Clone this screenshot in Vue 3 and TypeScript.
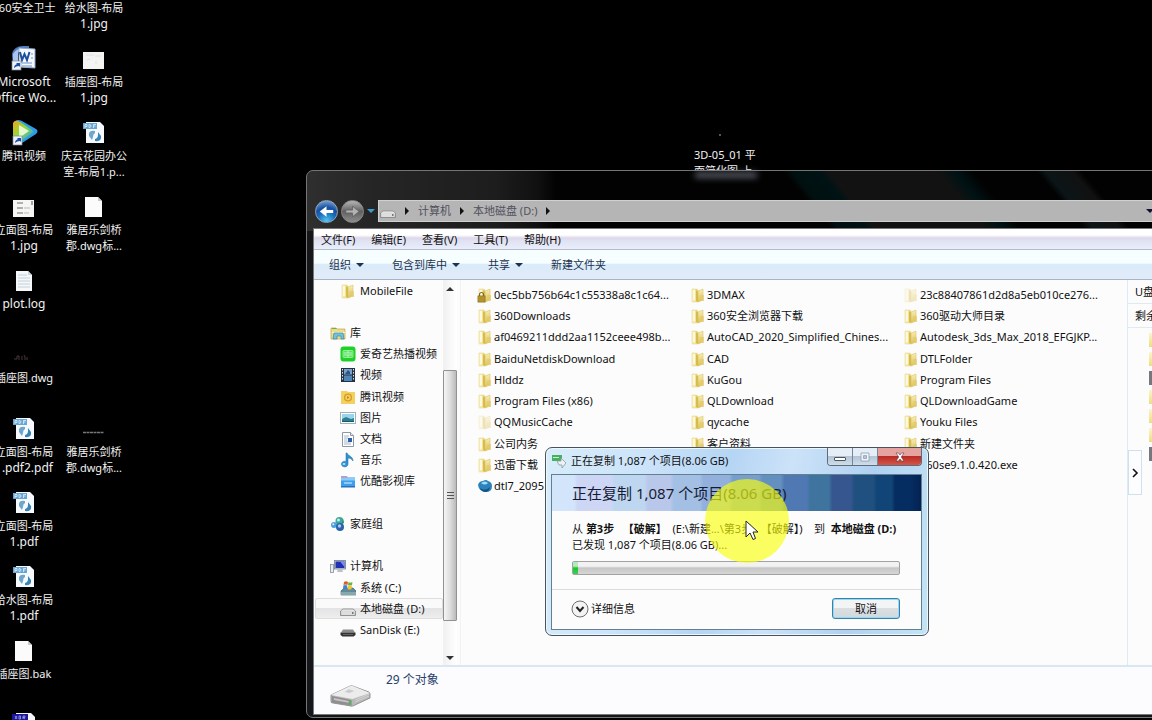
<script setup lang="ts">
interface DesktopIcon {
  icon: string
  lines: string[]
  row: number
  col: number
}
interface NavItem {
  icon: string
  label: string
  row: number
  root?: boolean
  selected?: boolean
}
interface FileItem {
  icon: string
  name: string
}

const desktopIcons: DesktopIcon[] = [
  { icon: '', lines: ['360安全卫士'], row: 1, col: 1 },
  { icon: '', lines: ['给水图-布局', '1.jpg'], row: 1, col: 2 },
  { icon: 'd-word', lines: ['Microsoft', 'Office Wo...'], row: 2, col: 1 },
  { icon: 'd-plan', lines: ['插座图-布局', '1.jpg'], row: 2, col: 2 },
  { icon: 'd-video', lines: ['腾讯视频'], row: 3, col: 1 },
  { icon: 'd-pdf', lines: ['庆云花园办公', '室-布局1.p...'], row: 3, col: 2 },
  { icon: 'd-sheet', lines: ['立面图-布局', '1.jpg'], row: 4, col: 1 },
  { icon: 'd-page', lines: ['雅居乐剑桥', '郡.dwg标...'], row: 4, col: 2 },
  { icon: 'd-log', lines: ['plot.log'], row: 5, col: 1 },
  { icon: 'd-faint', lines: ['插座图.dwg'], row: 6, col: 1 },
  { icon: 'd-pdf', lines: ['立面图-布局', '1.pdf2.pdf'], row: 7, col: 1 },
  { icon: 'd-line', lines: ['雅居乐剑桥', '郡.dwg标...'], row: 7, col: 2 },
  { icon: 'd-pdf', lines: ['立面图-布局', '1.pdf'], row: 8, col: 1 },
  { icon: 'd-pdf', lines: ['给水图-布局', '1.pdf'], row: 9, col: 1 },
  { icon: 'd-page', lines: ['插座图.bak'], row: 10, col: 1 },
  { icon: 'd-xdr', lines: [], row: 11, col: 1 },
]

const menus = ['文件(F)', '编辑(E)', '查看(V)', '工具(T)', '帮助(H)']

const commands = [
  { label: '组织', drop: true },
  { label: '包含到库中', drop: true },
  { label: '共享', drop: true },
  { label: '新建文件夹', drop: false },
]

const navItems: NavItem[] = [
  { icon: 'i-folder', label: 'MobileFile', row: 1 },
  { icon: 'i-library', label: '库', row: 3, root: true },
  { icon: 'i-iqiyi', label: '爱奇艺热播视频', row: 4 },
  { icon: 'i-film', label: '视频', row: 5 },
  { icon: 'i-tencent', label: '腾讯视频', row: 6 },
  { icon: 'i-picture', label: '图片', row: 7 },
  { icon: 'i-doc', label: '文档', row: 8 },
  { icon: 'i-music', label: '音乐', row: 9 },
  { icon: 'i-youku', label: '优酷影视库', row: 10 },
  { icon: 'i-home', label: '家庭组', row: 12, root: true },
  { icon: 'i-computer', label: '计算机', row: 14, root: true },
  { icon: 'i-windisk', label: '系统 (C:)', row: 15 },
  { icon: 'i-disk', label: '本地磁盘 (D:)', row: 16, selected: true },
  { icon: 'i-usb', label: 'SanDisk (E:)', row: 17 },
  { icon: 'i-network', label: '', row: 19, root: true },
]

const files: FileItem[] = [
  { icon: 'i-locked', name: '0ec5bb756b64c1c55338a8c1c64...' },
  { icon: 'i-folder', name: '3DMAX' },
  { icon: 'i-pale', name: '23c88407861d2d8a5eb010ce276...' },
  { icon: 'i-folder', name: '360Downloads' },
  { icon: 'i-folder', name: '360安全浏览器下载' },
  { icon: 'i-folder', name: '360驱动大师目录' },
  { icon: 'i-folder', name: 'af0469211ddd2aa1152ceee498b...' },
  { icon: 'i-folder', name: 'AutoCAD_2020_Simplified_Chines...' },
  { icon: 'i-folder', name: 'Autodesk_3ds_Max_2018_EFGJKP...' },
  { icon: 'i-folder', name: 'BaiduNetdiskDownload' },
  { icon: 'i-folder', name: 'CAD' },
  { icon: 'i-folder', name: 'DTLFolder' },
  { icon: 'i-folder', name: 'Hlddz' },
  { icon: 'i-folder', name: 'KuGou' },
  { icon: 'i-folder', name: 'Program Files' },
  { icon: 'i-folder', name: 'Program Files (x86)' },
  { icon: 'i-folder', name: 'QLDownload' },
  { icon: 'i-folder', name: 'QLDownloadGame' },
  { icon: 'i-pale', name: 'QQMusicCache' },
  { icon: 'i-folder', name: 'qycache' },
  { icon: 'i-folder', name: 'Youku Files' },
  { icon: 'i-folder', name: '公司内务' },
  { icon: 'i-folder', name: '客户资料' },
  { icon: 'i-folder', name: '新建文件夹' },
  { icon: 'i-folder', name: '迅雷下载' },
  { icon: '', name: '' },
  { icon: 'i-folder', name: '360se9.1.0.420.exe' },
  { icon: 'i-dtl', name: 'dtl7_2095' },
]

const previewRows = ['folder', 'folder', 'app', 'folder', 'folder', 'folder', 'app']

const isLatin = (text: string): boolean => /^[\x20-\x7e]*$/.test(text)
</script>

<template>
  <main class="desktop">
    <svg class="sprites" width="0" height="0" aria-hidden="true">
      <defs>
        <linearGradient id="g-folder" x1="0" x2="1" y1="0" y2="0">
          <stop offset="0" stop-color="#faf3c4" /><stop offset="1" stop-color="#ecd980" />
        </linearGradient>
        <linearGradient id="g-flap" x1="0" x2="0" y1="0" y2="1">
          <stop offset="0" stop-color="#f8efb4" /><stop offset="1" stop-color="#dcc258" />
        </linearGradient>
        <linearGradient id="g-disk" x1="0" x2="0" y1="0" y2="1">
          <stop offset="0" stop-color="#f4f4f4" /><stop offset="1" stop-color="#a8a8a8" />
        </linearGradient>
        <linearGradient id="g-play" x1="0" x2="1" y1="0" y2="1">
          <stop offset="0" stop-color="#f6a21c" /><stop offset="0.45" stop-color="#8fdc3a" /><stop offset="1" stop-color="#2c9bea" />
        </linearGradient>
      </defs>
      <symbol id="i-folder" viewBox="0 0 16 16">
        <path d="M2 2h5l1 1v12H2z" fill="url(#g-folder)" stroke="#e6d68e" stroke-width=".6" />
        <path d="M8 4l5-2v11l-5 2z" fill="url(#g-flap)" stroke="#dcc56c" stroke-width=".6" />
        <path d="M6 3l2 1.500V15l-2-1z" fill="#d8bb4c" /><path d="M3 3h2v10H3z" fill="#fdf9dc" />
        <path d="M10 8h4v6h-4z" fill="#e2cb6c" opacity=".7" />
      </symbol>
      <symbol id="i-pale" viewBox="0 0 16 16"><g opacity=".4"><use href="#i-folder" width="16" height="16" /></g></symbol>
      <symbol id="i-locked" viewBox="0 0 16 16">
        <use href="#i-folder" width="16" height="16" />
        <path d="M2.500 9V7.500a2 2 0 0 1 4 0V9" fill="none" stroke="#7d6a26" stroke-width="1.200" />
        <rect x="1" y="9" width="7" height="6" fill="#c9a42c" stroke="#7d6a26" stroke-width=".8" /><path d="M2 11h5M2 13h5" stroke="#7d6a26" stroke-width=".6" />
      </symbol>
      <symbol id="i-library" viewBox="0 0 16 16">
        <path d="M1 3h5l1 1h8v10H1z" fill="#f0dc86" stroke="#b9a558" stroke-width=".7" />
        <path d="M2 3h4l1 1H2z" fill="#62b35c" /><path d="M2 7h13v1H2z" fill="#fff6cf" />
        <path d="M4 8h9l1 6h-3v-3H7v3H3z" fill="#6fc3dd" stroke="#3d87a4" stroke-width=".7" />
      </symbol>
      <symbol id="i-iqiyi" viewBox="0 0 16 16">
        <rect x=".5" y=".5" width="15" height="15" rx="3" fill="#1fd127" /><rect x="3" y="4.500" width="10" height="7" rx="1" fill="#56e25c" stroke="#a9f5ab" stroke-width=".8" />
        <path d="M5 6v4M7 6h2v4H7zM11 6v4" stroke="#e4ffe4" fill="none" stroke-width=".7" />
      </symbol>
      <symbol id="i-film" viewBox="0 0 16 16">
        <rect x="1" y="1" width="14" height="14" fill="#26323f" /><rect x="4" y="2" width="8" height="5.500" fill="#7ba3c9" /><rect x="4" y="8.500" width="8" height="5.500" fill="#4e86ba" />
        <path d="M2.500 2v12M13.500 2v12" stroke="#dfe7ee" stroke-dasharray="1.500 1.500" />
        <path d="M5 7l3-4 2 2v2z" fill="#2b5483" />
      </symbol>
      <symbol id="i-tencent" viewBox="0 0 16 16">
        <path d="M1 2h6l1 1h7v12H1z" fill="#f4d05e" /><circle cx="8" cy="8.500" r="3.400" fill="none" stroke="#d79c2a" stroke-width="1.400" /><path d="M7 7l2.500 1.500L7 10z" fill="#cb8412" />
      </symbol>
      <symbol id="i-picture" viewBox="0 0 16 16">
        <rect x=".5" y="2.500" width="15" height="11" fill="#fff" stroke="#9db2bf" /><rect x="2" y="4" width="12" height="8" fill="#9bd4ea" />
        <path d="M2 9l4-2 5 2 3-1v4H2z" fill="#2c7e91" /><path d="M2 11h12v1H2z" fill="#175a6b" />
      </symbol>
      <symbol id="i-doc" viewBox="0 0 16 16">
        <path d="M2.500 1.500h8l3 3v11h-11z" fill="#fff" stroke="#8b98a6" /><path d="M10.500 1.500v3h3" fill="#dde6ee" stroke="#8b98a6" />
        <path d="M4 5h5M4 7h4M4 9h3M4 11h7M4 13h7" stroke="#8fa5bd" stroke-width=".8" /><rect x="8" y="7" width="4" height="4" fill="#2c5fa8" />
      </symbol>
      <symbol id="i-music" viewBox="0 0 16 16">
        <path d="M7 1c1 3 6 3 6 8-1-2-3-3-5-3v6a3.300 2.800 0 1 1-2-2.500V1z" fill="#2f93d4" stroke="#1c6ba6" stroke-width=".5" /><ellipse cx="4" cy="12" rx="1.500" ry="1" fill="#a9e0fa" />
      </symbol>
      <symbol id="i-youku" viewBox="0 0 16 16">
        <path d="M1 3h6l1 2H1z" fill="#d98cc0" /><path d="M1 4.500h14V14H1z" fill="#3ea0ea" /><path d="M1 4.500h14v3H1z" fill="#8ccbf6" /><path d="M4 10h8" stroke="#a8d8fa" stroke-width="1.500" /><path d="M1 13h14v1.500H1z" fill="#2770be" />
      </symbol>
      <symbol id="i-home" viewBox="0 0 16 16">
        <circle cx="9.500" cy="5" r="4" fill="#3ba7a4" /><circle cx="4" cy="9" r="3" fill="#4f9fd9" /><circle cx="10" cy="11" r="4" fill="#2b62a9" />
        <circle cx="8.500" cy="4" r="1.600" fill="#bdeed6" /><circle cx="3.300" cy="8.200" r="1" fill="#d3eeff" /><circle cx="9.500" cy="10" r="1.700" fill="#a5cdf5" /><path d="M13 3l1 4-2 1z" fill="#2c8b3e" />
      </symbol>
      <symbol id="i-computer" viewBox="0 0 16 16">
        <rect x=".5" y="6.500" width="3" height="8" fill="#e9edf0" stroke="#82909c" stroke-width=".8" /><rect x="4.500" y="2.500" width="11" height="8.500" fill="#cfd6dd" stroke="#707d8b" stroke-width=".8" />
        <rect x="5.500" y="3.500" width="9" height="6.500" fill="#2131b4" /><path d="M10 3.500h4.500V9z" fill="#7d8ee8" /><path d="M8 11h4l1 3H7z" fill="#b9c1c9" />
      </symbol>
      <symbol id="i-windisk" viewBox="0 0 16 16">
        <path d="M2 10l2-2h9l3 3v4H1v-4z" fill="#5f8c9c" stroke="#39525e" stroke-width=".6" /><path d="M1 12h15v3H1z" fill="#85a9ad" />
        <path d="M4 2q2-1.500 4 0L7.500 5q-2-1-4 0z" fill="#e2592c" /><path d="M8.500 2q2 1.200 4 0L12 5q-2 1-4 0z" fill="#6bb43c" />
        <path d="M3.300 5.500q2-1.200 4 0L7 9q-2-1-4 0z" fill="#3b87d2" /><path d="M8 5.500q2 1.200 4 0L11.500 9q-2 1-4 0z" fill="#f5c430" />
      </symbol>
      <symbol id="i-disk" viewBox="0 0 16 16">
        <path d="M3 8h10l2.500 2v4.500H.5V10z" fill="url(#g-disk)" stroke="#858585" stroke-width=".8" /><path d="M1.500 10.500h13V14h-13z" fill="#dedede" /><rect x="12" y="11" width="1.500" height="2" fill="#777" />
      </symbol>
      <symbol id="i-usb" viewBox="0 0 16 16">
        <path d="M3 7.500h10l2 3H1z" fill="#8c8c8c" /><path d="M.5 10.500h15v2.500l-2 1.500h-11l-2-1.500z" fill="#333" /><path d="M3 12.500h10" stroke="#777" stroke-width=".7" />
      </symbol>
      <symbol id="i-network" viewBox="0 0 16 16"><circle cx="8" cy="9" r="6" fill="#3a8bc8" /><path d="M3 7q5-4 10 0" fill="none" stroke="#b8e2f8" /></symbol>
      <symbol id="i-dtl" viewBox="0 0 16 16">
        <path d="M1 7q1-4 5-4 3-2 5 0 4 1 4 5 0 6-6 6-7 0-8-7z" fill="#2b83bc" /><path d="M4 5q4-3 7 0-3 3-7 0z" fill="#9fdcf3" /><path d="M3 10q5 4 10-1-1 5-5 5-4-1-5-4z" fill="#14517f" />
      </symbol>
      <symbol id="d-word" viewBox="1 -2 32 32">
        <path d="M5 12q2-8 11-8h6v4H11v19l-5-1z" fill="#4d7cc0" /><path d="M6 12q3-5 9-6l-4 5v12l-5 1z" fill="#a9c6ea" /><path d="M12 6l16 1v19l-16-1z" fill="#f4f8ff" stroke="#8da9ce" />
        <path d="M13 10l2 8L17.500 12l2.500 6 2.500-8" fill="none" stroke="#1f4f9e" stroke-width="2" /><path d="M15 21h10M15 24h10M24 12h2M24 16h2" stroke="#6e91c7" /><use href="#d-short" y="-1" width="32" height="32" />
      </symbol>
      <symbol id="d-short" viewBox="0 0 32 32"><rect x="5" y="20" width="9" height="9" fill="#eef3fa" stroke="#7d8b9b" stroke-width=".7" /><path d="M7 27q0-3 3-4l-1-1h4v4l-1-1q-3 0-5 2z" fill="#1d4fa0" /></symbol>
      <symbol id="d-video" viewBox="0 -2 32 32">
        <path d="M6 7q2-5 8-2l14 8q3 2 0 5l-14 9q-8 2-8-4z" fill="#2f9ce8" /><path d="M5 7q2-4 7-1l12 8q2 2 0 3l-11 8q-8 2-8-3z" fill="url(#g-play)" /><path d="M11 9l10 6-10 7z" fill="#f6ffe9" opacity=".85" /><use href="#d-short" width="32" height="32" />
      </symbol>
      <symbol id="d-plan" viewBox="0 0 32 32"><rect x="5" y="12" width="21" height="17" fill="#f4f4f2" /><path d="M8 15h8M17 16h6M9 20l3-1M18 21v3" fill="none" stroke="#dcdcdc" stroke-width=".8" /></symbol>
      <symbol id="d-sheet" viewBox="0 0 32 32"><rect x="5" y="12" width="21" height="17" fill="#f6f6f4" /><path d="M9 15h6M9 20h6M9 25h6" stroke="#6a6a6a" stroke-width="1.200" /><path d="M16 20h6M16 25h5" stroke="#bbb" /><path d="M24 13v4" stroke="#555" /></symbol>
      <symbol id="d-pdf" viewBox="1 0 32 32">
        <path d="M9 8h14l4 4v17H9z" fill="#f6faff" /><rect x="6" y="9" width="14" height="6" fill="#67a6d3" /><path d="M8 14v-3.500h2v2H8M12 10.500v3q2 0 2-1.500t-2-1.500M16.500 14v-3.500H19M16.500 12H18.500" stroke="#dff1ff" fill="none" stroke-width=".8" />
        <path d="M18 17q-7-1-6 5l3 4 1-3q0-3 2-4z" fill="#71a6cb" /><path d="M18 27q7 1 6-5l-3-4v3q0 3-3 4z" fill="#3b84b6" />
      </symbol>
      <symbol id="d-page" viewBox="0 0 32 32"><path d="M7 9h13l4 4v16H7z" fill="#fbfbfb" /><path d="M20 9l4 4h-4z" fill="#c9c9c9" /></symbol>
      <symbol id="d-log" viewBox="0 0 32 32"><path d="M8 9h12l4 4v16H8z" fill="#f5f8fa" /><path d="M20 9l4 4h-4z" fill="#c9d4dc" /><path d="M10 13h9M10 16h12M10 19h12M10 22h12M10 25h12" stroke="#b8c7d1" stroke-width=".8" /></symbol>
      <symbol id="d-faint" viewBox="0 0 32 32"><path d="M6 23h3v-3h2v4M14 20v4M16 19l1 2v3M19 21v3" stroke="#5c4446" fill="none" stroke-width=".8" /></symbol>
      <symbol id="d-line" viewBox="0 0 32 32"><path d="M5 22.500h21" stroke="#777" stroke-width="1.500" stroke-dasharray="3 .5" /></symbol>
      <symbol id="d-xdr" viewBox="1 1 32 32"><path d="M9 8h15l4 4v17H9z" fill="#f4f6fb" /><rect x="5" y="9" width="16" height="7" fill="#1a1897" /><path d="M8 11l2 3M10 11l-2 3M12 11v3h1.500v-3zM16 14v-3h2v1.500h-2l2 1.500" stroke="#b7b7f4" fill="none" stroke-width=".7" /></symbol>
      <symbol id="i-copy" viewBox="0 0 16 16">
        <path d="M1 2h10v6H1z" fill="#46b060" /><path d="M2 4h6v1H2z" fill="#c9f5cf" /><path d="M6 8h4V5l5 5-4 5v-3H8z" fill="#eef1f3" stroke="#8a9aa3" stroke-width=".8" />
      </symbol>
    </svg>

    <ul class="shortcuts">
      <li v-for="(item, n) in desktopIcons" :key="n" :style="{ gridRow: item.row, gridColumn: item.col }">
        <svg class="shortcut-icon" aria-hidden="true"><use v-if="item.icon" :href="'#' + item.icon" /></svg>
        <span v-for="line in item.lines" :key="line" class="shortcut-line" :class="{ latin: isLatin(line) }">{{ line }}</span>
      </li>
    </ul>

    <div class="loose-shortcut">
      <i class="speck"></i>
      <span>3D-05_01 平</span>
      <span>面简化图-上</span>
    </div>

    <section class="explorer" aria-label="本地磁盘 (D:)">
      <i class="glass-smudge"></i>
      <header class="address-row">
        <button class="orb orb-back" type="button" aria-label="后退">
          <svg viewBox="0 0 22 22"><path d="M18 9.500v3h-7v4L4 11l7-5.500v4z" fill="#fff" /></svg>
        </button>
        <button class="orb orb-forward" type="button" aria-label="前进">
          <svg viewBox="0 0 22 22"><path d="M4 9.500v3h7v4l7-5.500-7-5.500v4z" fill="#b2b2b2" stroke="#5d5d5d" stroke-width=".8" /></svg>
        </button>
        <button class="recent" type="button" aria-label="最近的位置"><i class="arrow-down"></i></button>
        <nav class="address" aria-label="地址">
          <svg class="small-icon" aria-hidden="true"><use href="#i-disk" /></svg>
          <i class="arrow-right"></i>
          <button type="button">计算机</button>
          <i class="arrow-right"></i>
          <button type="button">本地磁盘 (D:)</button>
          <i class="arrow-right"></i>
          <i class="arrow-down address-drop"></i>
        </nav>
      </header>

      <div class="client">
        <nav class="menu-bar" aria-label="菜单">
          <button v-for="menu in menus" :key="menu" type="button">{{ menu }}</button>
        </nav>
        <div class="command-bar">
          <button v-for="cmd in commands" :key="cmd.label" type="button">
            {{ cmd.label }}<i v-if="cmd.drop" class="arrow-down"></i>
          </button>
        </div>

        <div class="panes">
          <aside class="nav-pane">
            <ul class="tree">
              <li v-for="item in navItems" :key="item.row" :class="{ root: item.root, selected: item.selected }" :style="{ gridRow: item.row }">
                <a href="#">
                  <svg class="small-icon" aria-hidden="true"><use :href="'#' + item.icon" /></svg>{{ item.label }}
                </a>
              </li>
            </ul>
            <div class="scrollbar" aria-hidden="true">
              <i class="arrow-up"></i>
              <div class="track"><div class="thumb"><i></i><i></i><i></i></div></div>
              <i class="arrow-down"></i>
            </div>
          </aside>

          <ul class="file-list">
            <li v-for="(file, n) in files" :key="n">
              <svg v-if="file.icon" class="small-icon" aria-hidden="true"><use :href="'#' + file.icon" /></svg>{{ file.name }}
            </li>
          </ul>

          <aside class="side-panel">
            <p>U盘</p>
            <p>剩余</p>
            <i v-for="(kind, n) in previewRows" :key="n" class="preview-item" :class="kind"></i>
            <button class="expander" type="button" aria-label="展开">
              <svg viewBox="0 0 8 10"><path d="M2 1l4 4-4 4" fill="none" stroke="#111" stroke-width="1.600" /></svg>
            </button>
          </aside>
        </div>

        <footer class="details">
          <svg class="drive" viewBox="0 0 42 24" aria-hidden="true">
            <path d="M1 11L20 2q2-1 4 0l16 6q1 1 1 2v4L24 22q-2 1-4 0L2 19q-1 0-1-2z" fill="#b9b9b9" stroke="#7f7f7f" stroke-width=".8" />
            <path d="M1 11L20 2q2-1 4 0l17 7-18 6z" fill="#ececec" /><path d="M2 12l20 4v6L2 19z" fill="#8f8f8f" /><path d="M4 14l15 3v2L4 16z" fill="#c6c6c6" />
            <path d="M21 17v4" stroke="#43c043" stroke-width="1.500" /><path d="M19 5l6 2-5 2-5-1z" fill="#cbcbcb" /><path d="M26 16l14-6M26 18l14-6" stroke="#e0e0e0" stroke-width=".7" />
          </svg>
          <span>29 个对象</span>
        </footer>
      </div>
    </section>

    <section class="dialog" role="dialog" aria-labelledby="copy-title">
      <header class="dialog-title">
        <svg class="small-icon" aria-hidden="true"><use href="#i-copy" /></svg>
        <span id="copy-title">正在复制 1,087 个项目(8.06 GB)</span>
        <div class="captions">
          <button type="button" aria-label="最小化"><svg viewBox="0 0 14 10"><rect x="1.500" y="5.500" width="11" height="3" rx=".5" fill="#fff" stroke="#4d5763" /></svg></button>
          <button type="button" aria-label="最大化" disabled><svg viewBox="0 0 14 10"><path d="M3 1h8v8H3zM5.500 3.500v3h3v-3z" fill="#eef4fa" fill-rule="evenodd" stroke="#8e9eae" stroke-width=".8" /></svg></button>
          <button class="close" type="button" aria-label="关闭"><svg viewBox="0 0 14 10"><path d="M3 1h2.500L7 3l1.500-2H11L8.300 5 11 9H8.500L7 7 5.500 9H3l2.700-4z" fill="#fff" stroke="#59323a" stroke-width=".6" /></svg></button>
        </div>
      </header>
      <div class="dialog-client">
        <h1>正在复制 1,087 个项目(8.06 GB)</h1>
        <div class="dialog-body">
          <p>从 <b>第3步&nbsp;&nbsp; 【破解】</b>&nbsp; (E:\新建...\第3步&nbsp;&nbsp; 【破解】)&nbsp;&nbsp; &nbsp;到&nbsp; <b>本地磁盘 (D:)</b></p>
          <p>已发现 1,087 个项目(8.06 GB)...</p>
          <div class="progress" role="progressbar" aria-label="复制进度" aria-valuenow="1" aria-valuemin="0" aria-valuemax="100"><i></i></div>
        </div>
        <footer class="dialog-foot">
          <button class="more" type="button">
            <svg viewBox="0 0 18 18"><circle cx="9" cy="9" r="8" fill="#f3f3f3" stroke="#6f6f6f" /><path d="M5.500 7L9 11l3.500-4" fill="none" stroke="#222" stroke-width="2" /></svg>
            详细信息
          </button>
          <button class="cancel" type="button">取消</button>
        </footer>
      </div>
    </section>

    <i class="click-halo"></i>
    <svg class="pointer" viewBox="0 0 14 21" aria-hidden="true">
      <path d="M1 1v16l4-4 3 6.500 2.500-1L8 12h5z" fill="#fff" stroke="#222" />
    </svg>
  </main>
</template>

<style>
html,
body {
  background: #000;
}
</style>

<style scoped>
* {
  box-sizing: border-box;
}
.desktop {
  position: relative;
  height: 100vh;
  overflow: hidden;
  background: #000;
  color: #111;
  font: 11px/16px "Noto Sans", "Noto Sans CJK SC", sans-serif;
}
ul,
p,
h1 {
  margin: 0;
  padding: 0;
  list-style: none;
}
button {
  margin: 0;
  padding: 0;
  border: 0;
  background: none;
  color: inherit;
  font: inherit;
}
a {
  color: inherit;
  text-decoration: none;
}
.sprites {
  position: absolute;
}
.latin {
  font-size: 12px;
}
.small-icon {
  flex: none;
  width: 16px;
  height: 16px;
}

/* triangles */
.arrow-down,
.arrow-up,
.arrow-right {
  flex: none;
  width: 0;
  height: 0;
  border: 4px solid transparent;
}
.arrow-down {
  border-top-color: currentColor;
  border-bottom: 0;
}
.arrow-up {
  border-bottom-color: currentColor;
  border-top: 0;
}
.arrow-right {
  border-left-color: #111;
  border-right: 0;
}

/* desktop shortcuts */
.shortcuts {
  position: absolute;
  display: grid;
  grid-template-columns: repeat(2, 70px);
  grid-auto-rows: 74px;
  margin: -36px 0 0 -11px;
  color: #f2f2f2;
}
.shortcuts li {
  display: flex;
  flex-direction: column;
  align-items: center;
}
.shortcut-icon {
  width: 32px;
  height: 32px;
  margin: 2px 0;
  flex: none;
}
.shortcut-line {
  white-space: nowrap;
}
.loose-shortcut {
  position: absolute;
  left: 694px;
  top: 134px;
  display: flex;
  flex-direction: column;
  color: #f2f2f2;
  white-space: nowrap;
}
.speck {
  width: 2px;
  height: 2px;
  margin: 0 0 11px 25px;
  background: #555;
}

/* explorer window */
.explorer {
  position: absolute;
  left: 306px;
  top: 170px;
  right: -12px;
  bottom: 2px;
  display: flex;
  flex-direction: column;
  padding: 0 6px 2px;
  border: 1px solid #757575;
  border-radius: 7px;
  background:
    linear-gradient(50deg, transparent 58%, #001010 59%, #001214 62%, #121212 63%, #121212 75%, #001214 77%, transparent 79%, transparent 86%, #0b1517 87%, #111 90%, transparent 91%) 0 0 / 100% 60px no-repeat,
    linear-gradient(90deg, #2f2f2f, #262626 7%, #1d1d1d 22%, #101010 27%, #020202 29%) 0 0 / 100% 60px no-repeat,
    #141619;
}
.glass-smudge {
  position: absolute;
  left: 388px;
  top: 1px;
  width: 62px;
  height: 6px;
  background: #8d93a3;
  opacity: 0.6;
  filter: blur(3px);
}
.address-row {
  display: flex;
  align-items: center;
  height: 24px;
  margin: 28px 0 5px;
  flex: none;
}
.orb {
  width: 23px;
  height: 23px;
  border: 1px solid #8da5bd;
  border-radius: 50%;
  flex: none;
  margin: 0 0 0 2px;
}
.orb svg {
  display: block;
  width: 21px;
  height: 21px;
}
.orb-back {
  background: radial-gradient(circle at 50% 95%, #4fc8f4, #1a6bb8 40%, #1650a0 60%, #9dbbe0);
}
.orb-forward {
  border-color: #8a8a8a;
  background: linear-gradient(#b5b5b5, #606060 50%, #8d8d8d);
  margin-left: 3px;
}
.recent {
  display: flex;
  justify-content: center;
  width: 14px;
  color: #3a9ed0;
}
.address {
  display: flex;
  align-items: center;
  flex: 1;
  height: 22px;
  margin-right: 1px;
  padding: 0 1px;
  border: 1px solid #d0d0d0;
  background: #b5b5b5;
  color: #51515e;
  gap: 9px;
}
.address .small-icon {
  height: 18px;
}
.address-drop {
  margin-left: auto;
  color: #101030;
}
.client {
  flex: 1;
  min-height: 0;
  display: flex;
  flex-direction: column;
  border: 1px solid #777;
  background: #fcfcfd;
}
.menu-bar {
  display: flex;
  align-items: center;
  gap: 16px;
  height: 21px;
  padding: 2px 0 0 7px;
  flex: none;
  border-bottom: 1px solid #b9b9cd;
  background: linear-gradient(#fff 0 30%, #ddd8ea 45%, #e0e2f2 60%, #e8eefb);
}
.command-bar {
  display: flex;
  align-items: center;
  height: 30px;
  padding-left: 15px;
  flex: none;
  gap: 28px;
  border-bottom: 1px solid #a9b3cc;
  background: linear-gradient(#f6feff 0 45%, #dbebf9 50%, #e1ebf8);
  color: #1b3350;
}
.command-bar button {
  display: flex;
  align-items: center;
  gap: 5px;
}
.panes {
  display: flex;
  flex: 1;
  min-height: 0;
  overflow: hidden;
}
.nav-pane {
  display: flex;
  width: 147px;
  flex: none;
  border-right: 1px solid #f0f2f6;
}
.tree {
  flex: 1;
  min-width: 0;
  display: grid;
  grid-template-rows: repeat(19, 1fr);
  height: 403px;
}
.tree li {
  display: flex;
  align-items: center;
  padding-left: 24px;
  margin-left: 1px;
  border: 1px solid transparent;
  white-space: nowrap;
}
.tree li.root {
  padding-left: 14px;
}
.tree li.selected {
  border-color: #dedede;
  border-radius: 2px;
  background: linear-gradient(#fafafa 50%, #e4e4e6 50%, #ededed);
}
.tree a {
  display: flex;
  align-items: center;
  gap: 4px;
}
.scrollbar {
  display: flex;
  flex-direction: column;
  align-items: center;
  width: 14px;
  margin-right: 3px;
  padding: 7px 0 5px;
  background: linear-gradient(90deg, #f0f0f0, #f8f8f8 50%, #fff);
  color: #333;
}
.track {
  flex: 1;
  width: 100%;
  padding: 79px 0 35px;
}
.thumb {
  display: flex;
  flex-direction: column;
  align-items: center;
  justify-content: center;
  gap: 2px;
  height: 100%;
  border: 1px solid #919191;
  border-radius: 1px;
  background: linear-gradient(90deg, #f5f5f5, #dedede 50%, #bababa);
}
.thumb i {
  width: 7px;
  height: 1px;
  background: #555;
}
.file-list {
  flex: 1;
  min-width: 0;
  display: grid;
  grid-template-columns: repeat(3, minmax(0, 1fr));
  grid-template-rows: repeat(10, 1fr);
  height: 213px;
  margin: 4px 11px 0 16px;
}
.file-list li {
  display: flex;
  align-items: center;
  gap: 1px;
  white-space: nowrap;
}
.side-panel {
  position: relative;
  width: 29px;
  flex: none;
  border-left: 1px solid #dcebf5;
  overflow: hidden;
}
.side-panel p {
  height: 24px;
  padding-left: 7px;
  border-bottom: 1px solid #e0eaf3;
  line-height: 24px;
  white-space: nowrap;
}
.preview-item {
  display: block;
  width: 14px;
  height: 14px;
  margin: 5px 0 5px 21px;
  background: linear-gradient(#fbf5cc, #eedd7c);
}
.preview-item.app {
  background: #77777d;
}
.expander {
  position: absolute;
  left: 0;
  top: 170px;
  width: 14px;
  height: 45px;
  border: 1px solid #cfe0ee;
  background: #fdfdff;
}
.expander svg {
  display: block;
  width: 8px;
  height: 10px;
  margin: auto;
}
.details {
  display: flex;
  align-items: flex-start;
  gap: 15px;
  height: 49px;
  flex: none;
  padding: 5px 16px 0;
  border-top: 2px solid #d9e6f3;
  background: #fcfcff;
  color: #26406a;
  font-size: 12px;
}
.drive {
  width: 41px;
  height: 24px;
  margin-top: 12px;
}

/* copy dialog */
.dialog {
  position: absolute;
  left: 545px;
  top: 447px;
  width: 384px;
  display: flex;
  flex-direction: column;
  padding: 0 6px 5px 5px;
  border: 1px solid #49525d;
  border-radius: 7px;
  background: linear-gradient(100deg, #d8edfa, #cbe3fa 25%, #b5d5f4 45%, #cce2f8 60%, #b1d1f2 80%, #c4e4f5);
  box-shadow: inset 0 0 0 1px #e9f7ff;
}
.dialog-title {
  display: flex;
  align-items: center;
  height: 26px;
  gap: 4px;
}
.captions {
  display: flex;
  align-self: flex-start;
  margin-left: auto;
  border: 1px solid #5d6b7a;
  border-top: 0;
  border-radius: 0 0 4px 4px;
  overflow: hidden;
}
.captions button {
  display: grid;
  place-items: center;
  width: 25px;
  height: 17px;
  border-right: 1px solid #75869a;
  background: linear-gradient(#e5edf6 45%, #b3c4d6 50%, #d0deeb);
}
.captions button.close {
  width: 43px;
  border-right: 0;
  background: linear-gradient(#e5a3a0 45%, #b92b25 50%, #d2584a);
}
.captions svg {
  width: 14px;
  height: 10px;
}
.dialog-client {
  border: 1px solid #62808f;
  background: #fcfcfd;
}
.dialog h1 {
  height: 36px;
  padding-left: 20px;
  font-size: 15px;
  font-weight: 400;
  line-height: 36px;
  color: #141c35;
  background: linear-gradient(90deg, #d3e5fa 0 6%, #cdd6f4 7% 16%, #bfd6f1 17% 25%, #b9c8ea 26% 32%, #a3c0e4 33% 40%, #92b0db 41% 48%, #779fce 49% 56%, #6490bf 57% 62%, #5079b4 63% 69%, #3f749f 70% 75%, #35568e 76% 81%, #1f5080 82% 87%, #124577 88% 92%, #052d61 93% 97%, #032254);
}
.dialog-body {
  padding: 10px 21px 14px 20px;
  white-space: nowrap;
}
.progress {
  height: 14px;
  margin-top: 8px;
  border: 1px solid #a2a2a2;
  border-radius: 2px;
  background: linear-gradient(#f2f2f2 0 35%, #c6c6c6 50%, #d6d6d6);
}
.progress i {
  display: block;
  width: 5px;
  height: 12px;
  background: linear-gradient(#b5eab9 0 35%, #1cc533 50%, #3ed04f);
}
.dialog-foot {
  display: flex;
  align-items: center;
  justify-content: space-between;
  height: 40px;
  padding: 0 21px 2px 19px;
  border-top: 1px solid #d9dde2;
}
.more {
  display: flex;
  align-items: center;
  gap: 2px;
}
.more svg {
  width: 18px;
  height: 18px;
}
.cancel {
  width: 68px;
  height: 21px;
  border: 1px solid #3c7fa8;
  border-radius: 3px;
  background: linear-gradient(#f2f4f5 50%, #dcdfe2 50%, #d2d8dc);
  box-shadow: inset 0 0 0 1px #8fdcf5;
}

/* pointer with its highlight */
.click-halo {
  position: absolute;
  left: 705px;
  top: 479px;
  width: 84px;
  height: 84px;
  border-radius: 50%;
  background: #fbff08;
  opacity: 0.64;
}
.pointer {
  position: absolute;
  left: 745px;
  top: 520px;
  width: 14px;
  height: 21px;
}
</style>
